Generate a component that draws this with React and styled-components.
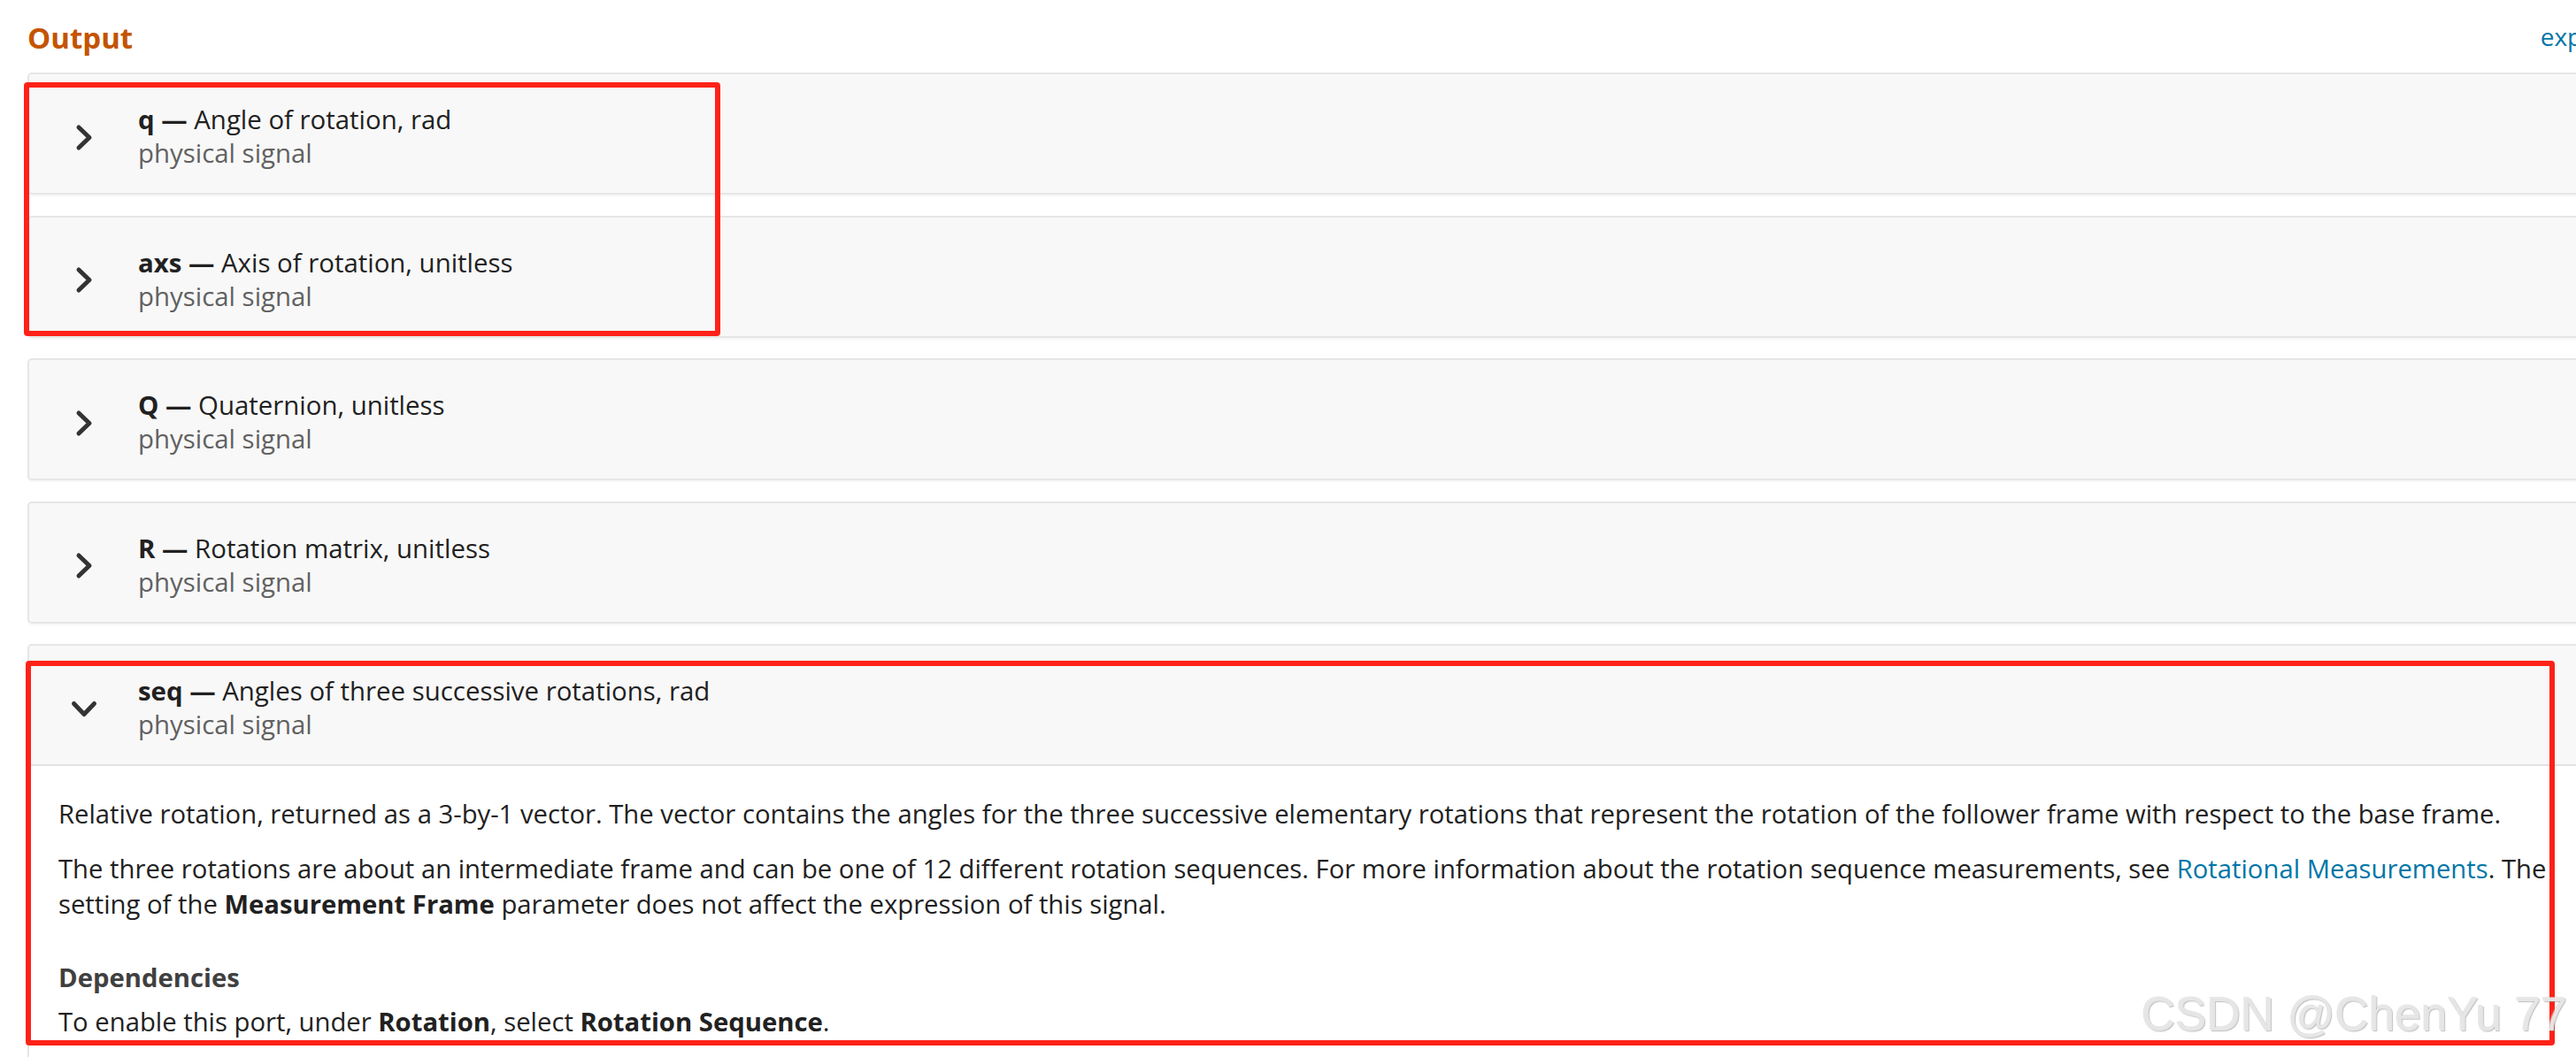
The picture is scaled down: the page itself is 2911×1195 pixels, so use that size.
import React from 'react';
import styled, { createGlobalStyle } from 'styled-components';

const GlobalStyle = createGlobalStyle`
  html, body {
    margin: 0;
    padding: 0;
    background: #fff;
    overflow: hidden;
  }
  body {
    font-family: "Open Sans", "Noto Sans", sans-serif;
    color: #212121;
  }
`;

const Page = styled.div`
  position: relative;
  width: 2911px;
  height: 1195px;
  overflow: hidden;
`;

const Content = styled.div`
  width: 2974px;
  padding-left: 31px;
`;

const TopBar = styled.div`
  display: flex;
  align-items: flex-start;
  height: 40px;
  padding-top: 23px;
  margin-bottom: 19px;
`;

const SectionTitle = styled.h2`
  margin: 0;
  font-size: 33px;
  line-height: 40px;
  font-weight: 700;
  color: #c45400;
`;

const ExpandLink = styled.a`
  margin-left: auto;
  font-size: 28px;
  line-height: 36px;
  color: #0076a8;
  text-decoration: none;
  white-space: nowrap;
`;

const CardList = styled.div`
  display: flex;
  flex-direction: column;
  gap: 23.5px;
`;

const Card = styled.div`
  background: #f8f8f8;
  border: 2px solid #e6e6e6;
  border-radius: 5px;
  box-shadow: 0 2px 2px rgba(0, 0, 0, 0.04);
`;

const CardHeader = styled.div`
  display: flex;
  align-items: center;
  padding: 33px 30px 25px 0;
  border-bottom: ${({ open }) => (open ? '2px solid #e2e2e2' : 'none')};
`;

const IconCell = styled.div`
  width: 123px;
  flex: none;
  display: flex;
  justify-content: center;
  align-items: center;
`;

const Chevron = styled.svg`
  width: 20px;
  height: 31px;
  transform: rotate(${({ open }) => (open ? '90deg' : '0deg')});
`;

const HeaderText = styled.div`
  display: flex;
  flex-direction: column;
`;

const ArgTitle = styled.div`
  font-size: 29.4px;
  line-height: 37px;
  color: #212121;
  white-space: nowrap;
`;

const ArgName = styled.strong`
  font-weight: 700;
`;

const ArgType = styled.div`
  font-size: 29.4px;
  line-height: 39px;
  color: #616161;
`;

const CardBody = styled.div`
  background: #fff;
  padding: 34px 60px 40px 33px;
  font-size: 29.25px;
  line-height: 40px;
`;

const Para = styled.p`
  margin: 0 0 22px;
`;

const SubHeading = styled.h4`
  margin: 43px 0 10px;
  font-size: 29.25px;
  line-height: 40px;
  font-weight: 700;
  color: #404040;
`;

const Link = styled.a`
  color: #0076a8;
  text-decoration: none;
`;

const RedBox = styled.div`
  position: absolute;
  box-sizing: border-box;
  border: 6px solid #ff2218;
  border-radius: 4px;
  pointer-events: none;
`;

const Watermark = styled.div`
  position: absolute;
  top: 1117px;
  left: 2420px;
  font-family: "Liberation Sans", Arial, sans-serif;
  font-size: 53px;
  line-height: 60px;
  color: rgba(232, 232, 232, 0.95);
  text-shadow: 1px 1px 1px rgba(140, 140, 140, 0.55), -1px -1px 0 rgba(215, 215, 215, 0.6);
  white-space: nowrap;
  pointer-events: none;
`;

const ports = [
  { name: 'q', desc: 'Angle of rotation, rad' },
  { name: 'axs', desc: 'Axis of rotation, unitless' },
  { name: 'Q', desc: 'Quaternion, unitless' },
  { name: 'R', desc: 'Rotation matrix, unitless' },
  { name: 'seq', desc: 'Angles of three successive rotations, rad', open: true },
];

const ChevronIcon = ({ open }) => (
  <Chevron open={open} viewBox="0 0 20 31" fill="none">
    <path d="M4 4 L16 15.5 L4 27" stroke="#333" strokeWidth="5" strokeLinecap="round" strokeLinejoin="round" />
  </Chevron>
);

const SeqDetails = () => (
  <CardBody>
    <Para>
      Relative rotation, returned as a 3-by-1 vector. The vector contains the angles for the three successive
      elementary rotations that represent the rotation of the follower frame with respect to the base frame.
    </Para>
    <Para>
      The three rotations are about an intermediate frame and can be one of 12 different rotation sequences. For
      more information about the rotation sequence measurements, see <Link href="#">Rotational Measurements</Link>.
      The setting of the <strong>Measurement Frame</strong> parameter does not affect the expression of this signal.
    </Para>
    <SubHeading>Dependencies</SubHeading>
    <Para>
      To enable this port, under <strong>Rotation</strong>, select <strong>Rotation Sequence</strong>.
    </Para>
  </CardBody>
);

const App = () => (
  <Page>
    <GlobalStyle />
    <Content>
      <TopBar>
        <SectionTitle>Output</SectionTitle>
        <ExpandLink href="#">expand all</ExpandLink>
      </TopBar>
      <CardList>
        {ports.map(port => (
          <Card key={port.name}>
            <CardHeader open={port.open}>
              <IconCell>
                <ChevronIcon open={port.open} />
              </IconCell>
              <HeaderText>
                <ArgTitle>
                  <ArgName>{port.name} —</ArgName> {port.desc}
                </ArgTitle>
                <ArgType>physical signal</ArgType>
              </HeaderText>
            </CardHeader>
            {port.open && <SeqDetails />}
          </Card>
        ))}
      </CardList>
    </Content>
    <RedBox style={{ left: 27, top: 93, width: 787, height: 287 }} />
    <RedBox style={{ left: 29, top: 747, width: 2858, height: 435 }} />
    <Watermark>CSDN @ChenYu 77</Watermark>
  </Page>
);

export default App;
